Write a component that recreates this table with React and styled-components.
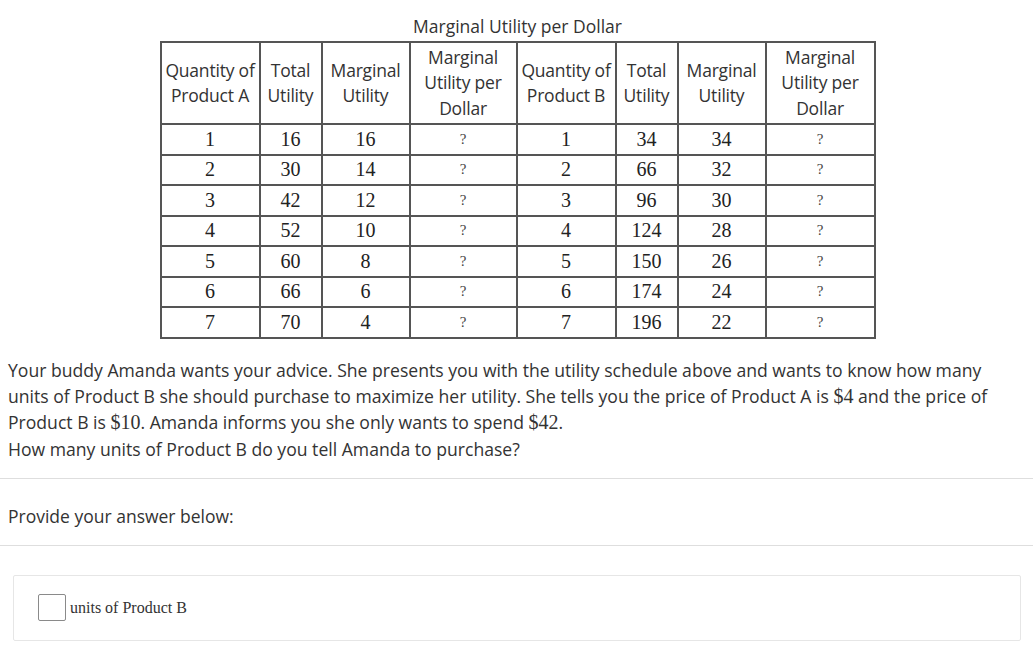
import React from "react";
import styled, { createGlobalStyle } from "styled-components";

const GlobalStyle = createGlobalStyle`
  html, body {
    margin: 0;
    padding: 0;
    background: #fff;
  }
  body {
    font-family: "Open Sans", "Liberation Sans", sans-serif;
    color: #333;
  }
`;

const Page = styled.div`
  width: 1033px;
  padding-top: 14px;
`;

const TableWrap = styled.div`
  display: flex;
  justify-content: center;
  padding-left: 2px;
`;

const Table = styled.table`
  border-collapse: collapse;
  table-layout: fixed;
  font-size: 17.5px;
  color: #333;
`;

const Caption = styled.caption`
  font-size: 17.5px;
  line-height: 24px;
  padding-bottom: 3px;
  color: #333;
`;

const HeadCell = styled.th`
  font-weight: 400;
  border: 2px solid #555;
  width: ${(p) => p.w}px;
  padding: 0;
  height: 80px;
  line-height: 25.5px;
  text-align: center;
  vertical-align: middle;
  white-space: nowrap;
  letter-spacing: -0.2px;
`;

const Cell = styled.td`
  border: 2px solid #555;
  padding: 0;
  height: 28.5px;
  text-align: center;
  vertical-align: middle;
  font-family: "Liberation Serif", "DejaVu Serif", serif;
  font-size: ${(p) => (p.q ? "15px" : "20px")};
  color: ${(p) => (p.q ? "#444" : "#222")};
`;

const Text = styled.div`
  padding: 18px 8px 0 8px;
  font-size: 17.6px;
  line-height: 26px;
  color: #333;
`;

const Para = styled.p`
  margin: 0 0 ${(p) => p.mb || 0}px 0;
`;

const Math = styled.span`
  font-family: "Liberation Serif", "DejaVu Serif", serif;
  font-size: 20px;
  line-height: 20px;
`;

const Divider = styled.hr`
  margin: 0;
  border: none;
  border-top: 1px solid #dedede;
`;

const Gap = styled.div`
  height: ${(p) => p.h}px;
`;

const Prompt = styled.div`
  box-sizing: border-box;
  padding: 8px 8px 0 8px;
  height: 66px;
  display: flex;
  align-items: center;
  font-size: 17.5px;
  color: #333;
`;

const AnswerBox = styled.div`
  margin: 29px 12px 0 13px;
  height: 64px;
  border: 1px solid #e6e6e6;
  border-radius: 2px;
  display: flex;
  align-items: center;
  padding-left: 24px;
  gap: 4px;
`;

const Input = styled.div`
  width: 26px;
  height: 25px;
  border: 1px solid #8a8a8a;
  border-radius: 2px;
  background: #fff;
`;

const Units = styled.span`
  font-family: "Liberation Serif", "DejaVu Serif", serif;
  font-size: 16px;
  color: #333;
`;

const heads = [
  [97, ["Quantity of", "Product A"]],
  [60, ["Total", "Utility"]],
  [86, ["Marginal", "Utility"]],
  [105, ["Marginal", "Utility per", "Dollar"]],
  [97, ["Quantity of", "Product B"]],
  [60, ["Total", "Utility"]],
  [86, ["Marginal", "Utility"]],
  [107, ["Marginal", "Utility per", "Dollar"]],
];

const rows = [
  [1, 16, 16, 1, 34, 34],
  [2, 30, 14, 2, 66, 32],
  [3, 42, 12, 3, 96, 30],
  [4, 52, 10, 4, 124, 28],
  [5, 60, 8, 5, 150, 26],
  [6, 66, 6, 6, 174, 24],
  [7, 70, 4, 7, 196, 22],
];

const App = () => (
  <Page>
    <GlobalStyle />
    <TableWrap>
      <Table>
        <Caption>Marginal Utility per Dollar</Caption>
        <thead>
          <tr>
            {heads.map(([w, lines], i) => (
              <HeadCell key={i} w={w}>
                {lines.map((l, j) => (
                  <React.Fragment key={j}>
                    {j > 0 && <br />}
                    {l}
                  </React.Fragment>
                ))}
              </HeadCell>
            ))}
          </tr>
        </thead>
        <tbody>
          {rows.map((r, i) => (
            <tr key={i}>
              <Cell>{r[0]}</Cell>
              <Cell>{r[1]}</Cell>
              <Cell>{r[2]}</Cell>
              <Cell q>?</Cell>
              <Cell>{r[3]}</Cell>
              <Cell>{r[4]}</Cell>
              <Cell>{r[5]}</Cell>
              <Cell q>?</Cell>
            </tr>
          ))}
        </tbody>
      </Table>
    </TableWrap>
    <Text>
      <Para mb={1}>
        Your buddy Amanda wants your advice. She presents you with the utility
        schedule above and wants to know how many units of Product B she should
        purchase to maximize her utility. She tells you the price of Product A
        is <Math>$4</Math> and the price of Product B is <Math>$10</Math>.
        Amanda informs you she only wants to spend <Math>$42</Math>.
      </Para>
      <Para>How many units of Product B do you tell Amanda to purchase?</Para>
    </Text>
    <Gap h={16} />
    <Divider />
    <Prompt>Provide your answer below:</Prompt>
    <Divider />
    <AnswerBox>
      <Input />
      <Units>units of Product B</Units>
    </AnswerBox>
  </Page>
);

export default App;
